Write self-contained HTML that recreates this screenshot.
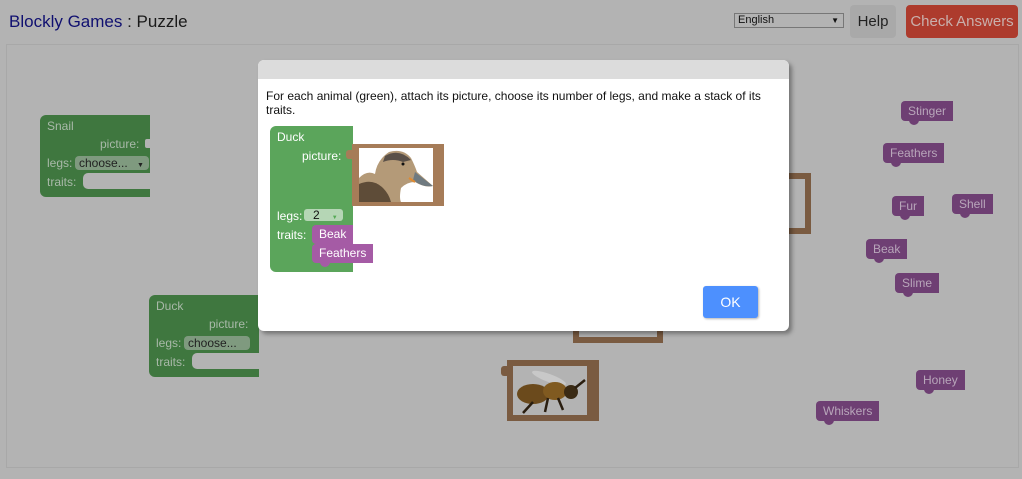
<!DOCTYPE html>
<html><head><meta charset="utf-8"><style>
*{margin:0;padding:0;box-sizing:border-box}
body{width:1022px;height:479px;overflow:hidden;background:#b3b3b3;font-family:"Liberation Sans",Arial,sans-serif;position:relative}
.a{position:absolute}
.trait{position:absolute;background:#6e3f73;color:#b8a6ba;font-size:12px;height:20px;line-height:20px;padding:0 7px;border-radius:4px 0 0 4px;white-space:nowrap}
.trait:after{content:"";position:absolute;left:8px;bottom:-4px;width:10px;height:5px;background:inherit;border-radius:0 0 5px 5px}
.gb{position:absolute;background:#3f773f;border-radius:6px 0 0 6px;color:#a9b9a9;font-size:12px}
.dd{position:absolute;background:#7f9a7f;border-radius:4px;color:#222;font-size:12px;padding:0 4px;height:14px;line-height:14px}
.sl{position:absolute;background:#b3b3b3;border-radius:5px 0 0 5px}
</style></head><body>
<div class="a" style="left:9px;top:12px;font-size:17px;color:#1a1a1a"><span style="color:#101070">Blockly Games</span> : Puzzle</div>
<div class="a" style="left:734px;top:13px;width:110px;height:15px;border:1px solid #777;background:#b3b3b3;font-size:11px;line-height:13px;padding-left:3px;color:#111">English<span style="position:absolute;right:4px;font-size:8px">▼</span></div>
<div class="a" style="left:850px;top:5px;width:46px;height:33px;background:#a9a9a9;border-radius:4px;font-size:15px;line-height:33px;text-align:center;color:#222">Help</div>
<div class="a" style="left:906px;top:5px;width:112px;height:33px;background:#ad3b2d;border-radius:4px;font-size:15px;line-height:33px;text-align:center;color:#c9b0ac">Check Answers</div>
<div class="a" style="left:6px;top:44px;width:1013px;height:424px;border:1px solid #a8a8a8"></div>

<!-- Snail block -->
<div class="gb" style="left:40px;top:115px;width:110px;height:82px">
<div class="a" style="left:7px;top:4px">Snail</div>
<div class="a" style="left:60px;top:22px">picture:</div>
<div class="a" style="right:0;top:24px;width:5px;height:9px;background:#b3b3b3;border-radius:2px 0 0 2px"></div>
<div class="a" style="left:7px;top:41px">legs:</div>
<div class="dd" style="left:35px;top:41px;width:74px">choose... <span style="font-size:7px;margin-left:6px">▼</span></div>
<div class="a" style="left:7px;top:60px">traits:</div>
<div class="sl" style="left:43px;top:58px;width:67px;height:16px"></div>
</div>
<!-- Duck block -->
<div class="gb" style="left:149px;top:295px;width:110px;height:82px">
<div class="a" style="left:7px;top:4px">Duck</div>
<div class="a" style="left:60px;top:22px">picture:</div>
<div class="a" style="left:7px;top:41px">legs:</div>
<div class="dd" style="left:35px;top:41px;width:66px">choose... <span style="font-size:7px;margin-left:4px">▼</span></div>
<div class="a" style="left:7px;top:60px">traits:</div>
<div class="sl" style="left:43px;top:58px;width:67px;height:16px"></div>
</div>

<!-- brown frames behind -->
<div class="a" style="left:785px;top:173px;width:26px;height:61px;border:6px solid #7a5b41;border-left:none"></div>
<div class="a" style="left:573px;top:320px;width:90px;height:23px;border:6px solid #7a5b41;border-top:none"></div>
<!-- bee -->
<div class="a" style="left:507px;top:360px;width:92px;height:61px;background:#7a5b41"></div>
<div class="a" style="left:501px;top:366px;width:8px;height:10px;background:#7a5b41;border-radius:3px 0 0 3px"></div>
<svg class="a" style="left:513px;top:366px" width="74" height="49" viewBox="0 0 74 49">
<rect width="74" height="49" fill="#b3b3b3"/>
<ellipse cx="36" cy="12" rx="18" ry="4" fill="#c8c8c8" transform="rotate(20 36 12)"/>
<ellipse cx="20" cy="28" rx="16" ry="10" fill="#6b4a1c"/>
<ellipse cx="42" cy="25" rx="12" ry="9" fill="#805a20"/>
<ellipse cx="58" cy="26" rx="7" ry="7" fill="#3a2a14"/>
<path d="M20 36 L10 47 M35 32 L32 46 M45 32 L50 44 M62 22 L72 14" stroke="#2a1e10" stroke-width="2.5"/>
</svg>

<div class="trait" style="left:901px;top:101px">Stinger</div>
<div class="trait" style="left:883px;top:143px">Feathers</div>
<div class="trait" style="left:892px;top:196px">Fur</div>
<div class="trait" style="left:952px;top:194px">Shell</div>
<div class="trait" style="left:866px;top:239px">Beak</div>
<div class="trait" style="left:895px;top:273px">Slime</div>
<div class="trait" style="left:916px;top:370px">Honey</div>
<div class="trait" style="left:816px;top:401px">Whiskers</div>

<!-- dialog -->
<div class="a" style="left:258px;top:60px;width:531px;height:271px;background:#fff;border-radius:6px;box-shadow:3px 3px 4px rgba(0,0,0,.35);overflow:hidden">
<div class="a" style="left:0;top:0;width:531px;height:19px;background:#dcdcdc"></div>
<div class="a" style="left:8px;top:29px;width:515px;font-size:12px;line-height:14px;color:#111">For each animal (green), attach its picture, choose its number of legs, and make a stack of its traits.</div>
<!-- duck block -->
<div class="a" style="left:12px;top:66px;width:83px;height:146px;background:#5ba55b;border-radius:6px 0 0 6px;color:#fff;font-size:12px">
<div class="a" style="left:7px;top:4px">Duck</div>
<div class="a" style="left:32px;top:23px">picture:</div>
<div class="a" style="left:7px;top:83px">legs:</div>
<div class="a" style="left:34px;top:83px;width:39px;height:12px;background:#b5d6b5;border-radius:3px;color:#111;font-size:12px;line-height:12px;padding-left:9px">2<span style="font-size:6px;margin-left:12px;color:#5a5">▼</span></div>
<div class="a" style="left:7px;top:102px">traits:</div>
<div class="a" style="left:42px;top:122px;width:41px;height:14px;background:#fff;border-radius:5px 0 0 5px"></div>
</div>
<div class="a" style="left:94px;top:84px;width:92px;height:62px;background:#a67c58"></div>
<div class="a" style="left:88px;top:90px;width:8px;height:9px;background:#a67c58;border-radius:3px 0 0 3px"></div>
<svg class="a" style="left:101px;top:88px" width="74" height="54" viewBox="0 0 74 54">
<rect width="74" height="54" fill="#fff"/>
<path d="M0 30 Q8 22 16 26 Q18 12 30 4 Q44 0 52 10 Q56 18 58 24 L74 38 Q66 40 56 34 Q48 34 42 40 Q40 50 42 54 L0 54 Z" fill="#b49a78"/>
<path d="M0 36 Q14 30 24 40 Q30 46 32 54 L0 54Z" fill="#5e4c38"/>
<path d="M26 8 Q40 0 52 12 L44 14 Q34 10 24 14Z" fill="#5a5048"/>
<path d="M56 24 L74 38 Q64 40 54 32Z" fill="#6f7a80"/>
<path d="M50 30 L56 34" stroke="#e08a30" stroke-width="2"/>
<circle cx="44" cy="16" r="1.5" fill="#111"/>
</svg>
<div class="trait" style="left:54px;top:165px;background:#a55ba5;color:#fff;height:19px;line-height:19px">Beak</div>
<div class="trait" style="left:54px;top:184px;background:#a55ba5;color:#fff;height:19px;line-height:19px">Feathers</div>
<div class="a" style="left:445px;top:226px;width:55px;height:32px;background:#4d90fe;border-radius:3px;box-shadow:1px 1px 2px rgba(0,0,0,.3);color:#fff;font-size:14px;line-height:32px;text-align:center">OK</div>
</div>
</body></html>
